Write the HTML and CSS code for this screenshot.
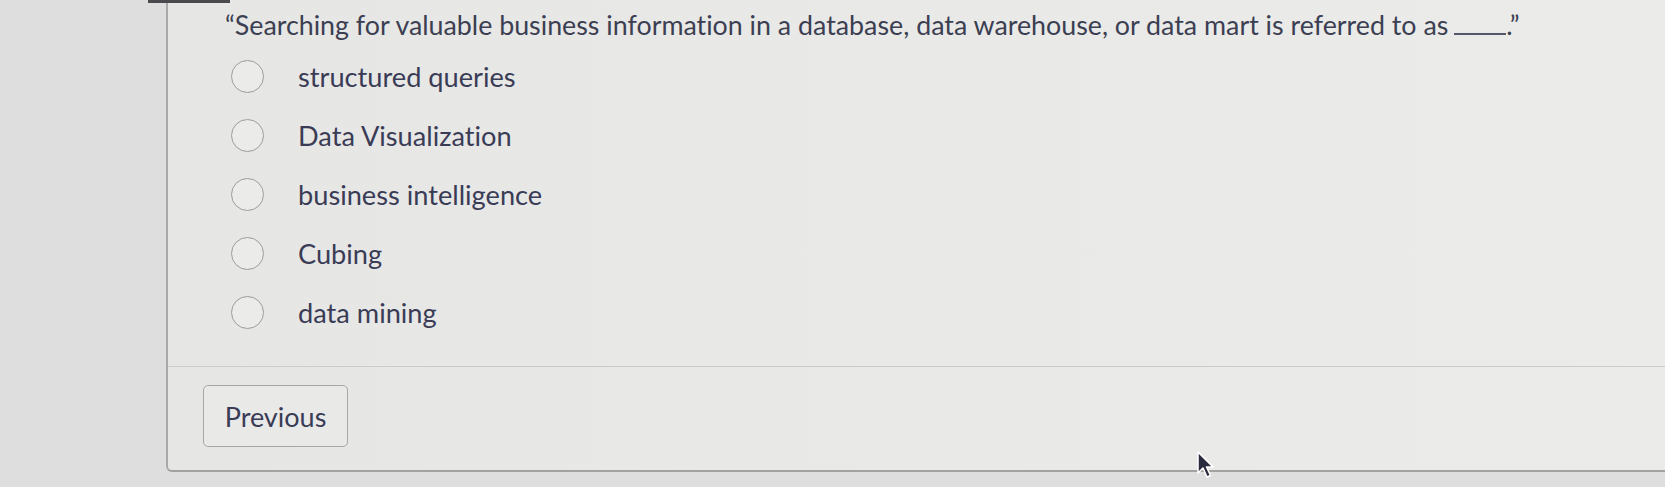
FILE: index.html
```html
<!DOCTYPE html>
<html lang="en">
<head>
    <meta charset="UTF-8">
    <meta name="viewport" content="width=device-width, initial-scale=1.0">
    <title>Quiz question</title>
    <link rel="stylesheet" href="styles.css">
</head>
<body>
    <div class="top-tab"></div>

    <div class="card">
        <p class="question">“Searching for valuable business information in a database, data warehouse, or data mart is referred to as<span class="blank"></span>.”</p>

        <div class="options">
            <label class="option"><span class="radio"></span><span class="option-text">structured queries</span></label>
            <label class="option"><span class="radio"></span><span class="option-text">Data Visualization</span></label>
            <label class="option"><span class="radio"></span><span class="option-text">business intelligence</span></label>
            <label class="option"><span class="radio"></span><span class="option-text">Cubing</span></label>
            <label class="option"><span class="radio"></span><span class="option-text">data mining</span></label>
        </div>

        <div class="card-footer">
            <button class="btn-prev">Previous</button>
        </div>
    </div>

    <!-- mouse pointer -->
    <svg class="cursor" width="20" height="28" viewBox="0 0 20 28">
        <path d="M2 1 L2 22 L7 17 L11 26 L14.5 24.5 L10.5 16 L17 16 Z" fill="#2b2b40" stroke="#ffffff" stroke-width="1.5" stroke-linejoin="round"/>
    </svg>
</body>
</html>
```

FILE: styles.css
```css
body {
    margin: 0;
    font-family: 'Lato', 'Open Sans', sans-serif;
    font-variant-ligatures: none;
    color: #3c3f52;
    background-color: #dedede;
    position: relative;
    height: 487px;
    overflow: hidden;
}
.top-tab {
    position: absolute;
    left: 148px;
    top: 0;
    width: 82px;
    height: 3px;
    background-color: #4a4a4e;
}
.card {
    margin-left: 166px;
    height: 472px;
    box-sizing: border-box;
    background: linear-gradient(90deg, #e6e6e5 0%, #e9e9e8 50%, #ebebea 100%);
    border-left: 2px solid #a9a9a9;
    border-bottom: 2px solid #a2a2a2;
    border-bottom-left-radius: 6px;
}
.question {
    margin: 0;
    padding: 10px 0 0 57px;
    font-size: 26.8px;
    line-height: 30px;
    white-space: nowrap;
}
.blank {
    display: inline-block;
    width: 52px;
    border-bottom: 2px solid #55586a;
    margin-left: 6px;
}
.options {
    margin-top: 7px;
    padding-left: 63px;
}
.option {
    display: flex;
    align-items: center;
    height: 59px;
}
.radio {
    width: 31px;
    height: 31px;
    border: 1.5px solid #9c9c9c;
    border-radius: 50%;
    background-color: #ebebea;
    flex-shrink: 0;
}
.option-text {
    margin-left: 34px;
    font-size: 27.2px;
    color: #3a3c56;
}
.card-footer {
    margin-top: 24px;
    border-top: 1px solid #cbcbcb;
    padding: 18px 0 0 35px;
}
.btn-prev {
    width: 145px;
    height: 62px;
    border: 1.5px solid #a7a7a7;
    border-radius: 5px;
    background-color: #e9e9e8;
    font-family: 'Lato', sans-serif;
    font-size: 27px;
    color: #3a3c56;
    cursor: pointer;
}
.cursor {
    position: absolute;
    left: 1196px;
    top: 451px;
}
```
